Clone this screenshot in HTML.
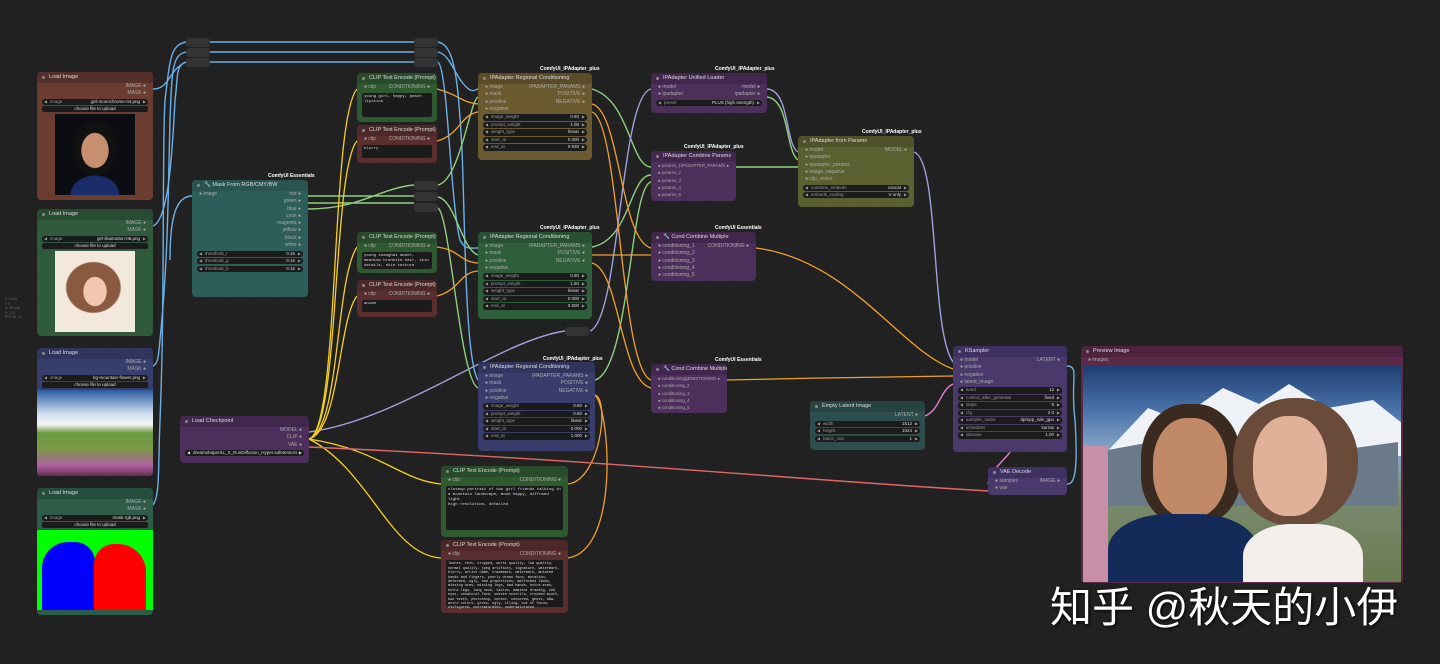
<!DOCTYPE html>
<html><head><meta charset="utf-8">
<style>
*{box-sizing:border-box;margin:0;padding:0}
body{width:1440px;height:664px;overflow:hidden;background:#212121;font-family:"Liberation Sans",sans-serif;color:#bbb;position:relative;
background-image:radial-gradient(#282828 0.6px,transparent 0.7px);background-size:6px 6px}
.n{position:absolute;border-radius:4px;overflow:hidden;font-size:5px;line-height:7px;white-space:nowrap}
.t{height:11px;line-height:11px;padding-left:12px;font-size:5.5px;color:#ddd;position:relative;white-space:nowrap;overflow:hidden}
.t:before{content:"";position:absolute;left:5px;top:4px;width:3px;height:3px;border-radius:50%;background:#888}
.r{height:7.3px;position:relative;padding:0 7px;color:#aaa}
.r .o{position:absolute;right:7px}
.w{margin:1.3px 5px;height:6.2px;border-radius:3px;background:#1b1b1b;color:#999;font-size:4.5px;line-height:6.2px;padding:0 8px;position:relative;overflow:hidden}
.w b{position:absolute;right:8px;font-weight:normal;color:#ddd}
.w:before{content:"◀";position:absolute;left:2px;font-size:4px}
.w:after{content:"▶";position:absolute;right:2px;font-size:4px}
.tx{margin:2px 5px;background:#1b1b1b;border-radius:2px;font-family:"Liberation Mono",monospace;font-size:4px;line-height:5px;color:#ddd;padding:2px;white-space:normal}
.lab{position:absolute;font-size:5px;color:#fff;font-weight:bold}
.rr{position:absolute;width:24px;height:9px;background:#333;border-radius:3px}
.btn{margin:1px 5px;height:6px;background:#1b1b1b;border-radius:2px;text-align:center;font-size:4.5px;line-height:6px;color:#ddd}
.sm .r{font-size:4.3px}
</style></head><body>

<svg width="1440" height="664" style="position:absolute;left:0;top:0" fill="none" stroke-width="1.4">
<g stroke="#6cb0e6">
<path d="M210 42 H414 M210 52 H414 M210 62 H414"/>
<path d="M186 42 C170 45 170 60 165 100 C162 150 165 300 160 420 C158 470 160 495 153 505"/>
<path d="M186 52 C172 55 172 70 170 120 C168 200 168 260 160 340 C158 360 158 363 153 366"/>
<path d="M186 62 C175 65 178 80 175 100 C172 160 168 220 153 226"/>
<path d="M153 89 C170 89 168 70 186 62"/>
<path d="M192 196 C175 196 170 220 170 260"/>
<path d="M438 42 C455 45 458 80 462 150 C465 220 465 360 478 380"/>
<path d="M438 52 C452 55 455 80 470 90 C475 92 476 89 478 89"/>
<path d="M438 62 C448 70 450 200 460 240 C465 250 470 248 478 248"/>
<path d="M1067 366 C1080 366 1070 380 1075 420 C1078 470 1075 485 1067 484"/>
</g>
<g stroke="#8fcf80">
<path d="M308 196 H414 M308 203 H414 M308 209 C360 209 380 188 414 185"/>
<path d="M438 185 C460 180 470 100 478 97"/>
<path d="M438 197 C455 200 462 250 478 255"/>
<path d="M438 208 C450 215 460 380 478 388"/>
<path d="M592 89 C630 100 630 166 651 167"/>
<path d="M592 247 C630 240 630 175 651 175"/>
<path d="M595 380 C630 370 630 185 651 182"/>
<path d="M767 97 C790 100 785 150 798 160"/>
<path d="M736 167 H798"/>
</g>
<g stroke="#a0a0dd">
<path d="M309 432 C400 420 500 340 565 331"/>
<path d="M590 331 C620 320 620 95 651 89"/>
<path d="M767 89 C790 90 785 145 798 152"/>
<path d="M914 152 C940 160 930 330 953 362"/>
</g>
<g stroke="#f5d020" stroke-width="1.3">
<path d="M309 439 C340 430 330 120 357 89"/>
<path d="M309 439 C340 430 332 170 357 141"/>
<path d="M309 439 C340 430 335 280 357 247"/>
<path d="M309 439 C340 430 338 320 357 296"/>
<path d="M309 439 C380 450 400 480 441 484"/>
<path d="M309 439 C370 470 390 555 441 558"/>
</g>
<g stroke="#f0a030" stroke-width="1.3">
<path d="M437 89 C460 95 460 102 478 104"/>
<path d="M437 141 C460 135 460 115 478 112"/>
<path d="M437 247 C460 250 460 262 478 263"/>
<path d="M437 296 C460 290 460 272 478 271"/>
<path d="M592 104 C620 110 620 240 651 248"/>
<path d="M592 112 C620 120 620 370 651 380"/>
<path d="M592 255 H651"/>
<path d="M592 263 C620 270 620 380 651 388"/>
<path d="M756 248 C850 260 900 350 953 369"/>
<path d="M727 380 C800 378 900 377 953 376"/>
<path d="M568 484 C600 480 610 400 595 395"/>
<path d="M568 558 C620 550 610 410 595 395"/>
</g>
<path d="M309 447 C600 460 800 480 988 491" stroke="#e06868"/>
<path d="M925 416 C940 410 940 390 953 384" stroke="#e080d0"/>
<path d="M1010 452 C1005 460 990 470 988 484" stroke="#e080d0"/>
</svg>

<div class="rr" style="left:186px;top:38px"></div><div class="rr" style="left:186px;top:48px"></div><div class="rr" style="left:186px;top:58px"></div>
<div class="rr" style="left:414px;top:38px"></div><div class="rr" style="left:414px;top:48px"></div><div class="rr" style="left:414px;top:58px"></div>
<div class="rr" style="left:414px;top:181px"></div><div class="rr" style="left:414px;top:192px"></div><div class="rr" style="left:414px;top:203px"></div>
<div class="rr" style="left:565px;top:327px"></div>

<div style="position:absolute;left:5px;top:297px;font-size:3.5px;color:#666;line-height:4.5px">T: 0.00s<br>I: 0<br>N: 26 [26]<br>V: 213<br>FPS:41.15</div>

<div class="n" style="left:37px;top:72px;width:116px;height:128px;background:#6a3d30">
<div class="t" style="background:#55302a">Load Image</div>
<div class="r"><span class="o">IMAGE ●</span></div><div class="r"><span class="o">MASK ●</span></div>
<div class="w">image<b>girl-monochrome-04.png</b></div><div class="btn">choose file to upload</div>
<div style="margin:2px auto;width:80px;height:81px;background:radial-gradient(ellipse 14px 18px at 50% 45%,#c69070 95%,transparent),radial-gradient(ellipse 25px 20px at 50% 100%,#1a2d6a 95%,transparent),radial-gradient(ellipse 22px 28px at 50% 42%,#111 95%,transparent),#0b0d12"></div>
</div>
<div class="n" style="left:37px;top:209px;width:116px;height:127px;background:#2f5a3b">
<div class="t" style="background:#284c32">Load Image</div>
<div class="r"><span class="o">IMAGE ●</span></div><div class="r"><span class="o">MASK ●</span></div>
<div class="w">image<b>girl-illustration-06.png</b></div><div class="btn">choose file to upload</div>
<div style="margin:2px auto;width:80px;height:81px;background:radial-gradient(ellipse 12px 15px at 50% 50%,#f0c8b0 95%,transparent),radial-gradient(ellipse 28px 26px at 48% 45%,#8a5a40 95%,transparent),#f3e8dc"></div>
</div>
<div class="n" style="left:37px;top:348px;width:116px;height:128px;background:#383e6c">
<div class="t" style="background:#30355e">Load Image</div>
<div class="r"><span class="o">IMAGE ●</span></div><div class="r"><span class="o">MASK ●</span></div>
<div class="w">image<b>bg-mountain-flower.png</b></div><div class="btn">choose file to upload</div>
<div style="margin-top:2px;width:116px;height:86px;background:linear-gradient(#2a5aa0 0%,#cfe0f0 28%,#f5f5f5 40%,#6a9a40 50%,#7a9a48 68%,#b060a0 88%,#603050 100%)"></div>
</div>
<div class="n" style="left:37px;top:488px;width:116px;height:127px;background:#2d5c48">
<div class="t" style="background:#264e3c">Load Image</div>
<div class="r"><span class="o">IMAGE ●</span></div><div class="r"><span class="o">MASK ●</span></div>
<div class="w">image<b>mask-rgb.png</b></div><div class="btn">choose file to upload</div>
<div style="margin-top:2px;width:116px;height:80px;background:#00ff00;position:relative;overflow:hidden">
<div style="position:absolute;left:5px;top:12px;width:53px;height:70px;background:#0000ff;border-radius:26px 20px 0 0"></div>
<div style="position:absolute;left:57px;top:14px;width:52px;height:70px;background:#ff0000;border-radius:20px 28px 0 0"></div></div>
</div>

<div class="lab" style="left:268px;top:173px">ComfyUI Essentials</div>
<div class="n" style="left:192px;top:180px;width:116px;height:117px;background:#2e5e5a">
<div class="t" style="background:#295450">🔧 Mask From RGB/CMY/BW</div>
<div class="r">● image<span class="o">red ●</span></div><div class="r"><span class="o">green ●</span></div><div class="r"><span class="o">blue ●</span></div><div class="r"><span class="o">cyan ●</span></div><div class="r"><span class="o">magenta ●</span></div><div class="r"><span class="o">yellow ●</span></div><div class="r"><span class="o">black ●</span></div><div class="r"><span class="o">white ●</span></div>
<div class="w">threshold_r<b>0.15</b></div><div class="w">threshold_g<b>0.15</b></div><div class="w">threshold_b<b>0.15</b></div>
</div>

<div class="n" style="left:180px;top:416px;width:129px;height:47px;background:#4c2f5a">
<div class="t" style="background:#41274e">Load Checkpoint</div>
<div class="r"><span class="o">MODEL ●</span></div><div class="r"><span class="o">CLIP ●</span></div><div class="r"><span class="o">VAE ●</span></div>
<div class="w" style="color:#ddd">dreamshaperXL_X_RunDiffusion_Hyper.safetensors</div>
</div>

<div class="n" style="left:357px;top:73px;width:80px;height:49px;background:#2f5a30"><div class="t" style="background:#284c2a">CLIP Text Encode (Prompt)</div>
<div class="r">● clip<span class="o">CONDITIONING ●</span></div><div class="tx" style="height:24px">young girl, happy, peach lipstick</div></div>
<div class="n" style="left:357px;top:125px;width:80px;height:38px;background:#5a2e2e"><div class="t" style="background:#4c2828">CLIP Text Encode (Prompt)</div>
<div class="r">● clip<span class="o">CONDITIONING ●</span></div><div class="tx" style="height:13px">blurry</div></div>
<div class="n" style="left:357px;top:232px;width:80px;height:41px;background:#2f5a30"><div class="t" style="background:#284c2a">CLIP Text Encode (Prompt)</div>
<div class="r">● clip<span class="o">CONDITIONING ●</span></div><div class="tx" style="height:17px">young shanghai model, meadium brunette hair, skin details, skin texture</div></div>
<div class="n" style="left:357px;top:280px;width:80px;height:37px;background:#5a2e2e"><div class="t" style="background:#4c2828">CLIP Text Encode (Prompt)</div>
<div class="r">● clip<span class="o">CONDITIONING ●</span></div><div class="tx" style="height:12px">anime</div></div>

<div class="lab" style="left:540px;top:66px">ComfyUI_IPAdapter_plus</div>
<div class="n" style="left:478px;top:73px;width:114px;height:87px;background:#6b5a2f">
<div class="t" style="background:#5a4c28">IPAdapter Regional Conditioning</div>
<div class="r">● image<span class="o">IPADAPTER_PARAMS ●</span></div><div class="r">● mask<span class="o">POSITIVE ●</span></div><div class="r">● positive<span class="o">NEGATIVE ●</span></div><div class="r">● negative</div>
<div class="w">image_weight<b>0.80</b></div><div class="w">prompt_weight<b>1.00</b></div><div class="w">weight_type<b>linear</b></div><div class="w">start_at<b>0.000</b></div><div class="w">end_at<b>0.930</b></div></div>
<div class="lab" style="left:540px;top:225px">ComfyUI_IPAdapter_plus</div>
<div class="n" style="left:478px;top:232px;width:114px;height:87px;background:#2f5e3a">
<div class="t" style="background:#285032">IPAdapter Regional Conditioning</div>
<div class="r">● image<span class="o">IPADAPTER_PARAMS ●</span></div><div class="r">● mask<span class="o">POSITIVE ●</span></div><div class="r">● positive<span class="o">NEGATIVE ●</span></div><div class="r">● negative</div>
<div class="w">image_weight<b>0.80</b></div><div class="w">prompt_weight<b>1.50</b></div><div class="w">weight_type<b>linear</b></div><div class="w">start_at<b>0.000</b></div><div class="w">end_at<b>0.500</b></div></div>
<div class="lab" style="left:543px;top:356px">ComfyUI_IPAdapter_plus</div>
<div class="n" style="left:478px;top:362px;width:117px;height:89px;background:#383d6c">
<div class="t" style="background:#30355e">IPAdapter Regional Conditioning</div>
<div class="r">● image<span class="o">IPADAPTER_PARAMS ●</span></div><div class="r">● mask<span class="o">POSITIVE ●</span></div><div class="r">● positive<span class="o">NEGATIVE ●</span></div><div class="r">● negative</div>
<div class="w">image_weight<b>0.80</b></div><div class="w">prompt_weight<b>0.80</b></div><div class="w">weight_type<b>linear</b></div><div class="w">start_at<b>0.000</b></div><div class="w">end_at<b>1.000</b></div></div>

<div class="lab" style="left:715px;top:66px">ComfyUI_IPAdapter_plus</div>
<div class="n" style="left:651px;top:73px;width:116px;height:40px;background:#4c2f5a">
<div class="t" style="background:#41274e">IPAdapter Unified Loader</div>
<div class="r">● model<span class="o">model ●</span></div><div class="r">● ipadapter<span class="o">ipadapter ●</span></div><div class="w">preset<b>PLUS (high strength)</b></div></div>
<div class="lab" style="left:684px;top:144px">ComfyUI_IPAdapter_plus</div>
<div class="n sm" style="left:651px;top:151px;width:85px;height:50px;background:#4c2f5a">
<div class="t" style="background:#41274e">IPAdapter Combine Params</div>
<div class="r">● params_1<span class="o">IPADAPTER_PARAMS ●</span></div><div class="r">● params_2</div><div class="r">● params_3</div><div class="r">● params_4</div><div class="r">● params_5</div></div>
<div class="lab" style="left:715px;top:225px">ComfyUI Essentials</div>
<div class="n" style="left:651px;top:232px;width:105px;height:49px;background:#4c2f5a">
<div class="t" style="background:#41274e">🔧 Cond Combine Multiple</div>
<div class="r">● conditioning_1<span class="o">CONDITIONING ●</span></div><div class="r">● conditioning_2</div><div class="r">● conditioning_3</div><div class="r">● conditioning_4</div><div class="r">● conditioning_5</div></div>
<div class="lab" style="left:715px;top:357px">ComfyUI Essentials</div>
<div class="n sm" style="left:651px;top:364px;width:76px;height:49px;background:#4c2f5a">
<div class="t" style="background:#41274e">🔧 Cond Combine Multiple</div>
<div class="r">● conditioning_1<span class="o">CONDITIONING ●</span></div><div class="r">● conditioning_2</div><div class="r">● conditioning_3</div><div class="r">● conditioning_4</div><div class="r">● conditioning_5</div></div>

<div class="lab" style="left:862px;top:129px">ComfyUI_IPAdapter_plus</div>
<div class="n" style="left:798px;top:136px;width:116px;height:71px;background:#5b6030">
<div class="t" style="background:#4e5228">IPAdapter from Params</div>
<div class="r">● model<span class="o">MODEL ●</span></div><div class="r">● ipadapter</div><div class="r">● ipadapter_params</div><div class="r">● image_negative</div><div class="r">● clip_vision</div>
<div class="w">combine_embeds<b>concat</b></div><div class="w">embeds_scaling<b>V only</b></div></div>

<div class="n" style="left:441px;top:466px;width:127px;height:71px;background:#2f5a30"><div class="t" style="background:#284c2a">CLIP Text Encode (Prompt)</div>
<div class="r">● clip<span class="o">CONDITIONING ●</span></div><div class="tx" style="height:44px">closeup portrait of two girl friends talking in a mountain landscape, mood happy, diffused light<br>high resolution, detailed</div></div>
<div class="n" style="left:441px;top:540px;width:127px;height:73px;background:#5a2e2e"><div class="t" style="background:#4c2828">CLIP Text Encode (Prompt)</div>
<div class="r">● clip<span class="o">CONDITIONING ●</span></div><div class="tx" style="height:47px;font-size:3.5px;line-height:4.4px">lowres, text, cropped, worst quality, low quality, normal quality, jpeg artifacts, signature, watermark, blurry, artist name, trademark, watermark, mutated hands and fingers, poorly drawn face, mutation, deformed, ugly, bad proportions, malformed limbs, missing arms, missing legs, bad hands, extra arms, extra legs, long neck, tattoo, amateur drawing, odd eyes, unnatural face, uneven nostrils, crooked mouth, bad teeth, photoshop, censor, censored, ghost, b&amp;w, weird colors, gross, ugly, tiling, out of focus, disfigured, oversaturated, undersaturated</div></div>

<div class="n" style="left:810px;top:401px;width:115px;height:49px;background:#2d4e4c">
<div class="t" style="background:#274442">Empty Latent Image</div>
<div class="r"><span class="o">LATENT ●</span></div><div class="w">width<b>1512</b></div><div class="w">height<b>1024</b></div><div class="w">batch_size<b>1</b></div></div>

<div class="n" style="left:953px;top:346px;width:114px;height:106px;background:#4a3a6c">
<div class="t" style="background:#3e3060">KSampler</div>
<div class="r">● model<span class="o">LATENT ●</span></div><div class="r">● positive</div><div class="r">● negative</div><div class="r">● latent_image</div>
<div class="w">seed<b>12</b></div><div class="w">control_after_generate<b>fixed</b></div><div class="w">steps<b>8</b></div><div class="w">cfg<b>2.0</b></div><div class="w">sampler_name<b>dpmpp_sde_gpu</b></div><div class="w">scheduler<b>karras</b></div><div class="w">denoise<b>1.00</b></div></div>
<div class="n" style="left:988px;top:467px;width:79px;height:28px;background:#4a3a6c">
<div class="t" style="background:#3e3060">VAE Decode</div>
<div class="r">● samples<span class="o">IMAGE ●</span></div><div class="r">● vae</div></div>

<div class="n" style="left:1081px;top:346px;width:322px;height:237px;background:#5a2a48">
<div class="t" style="background:#4e2340">Preview Image</div>
<div class="r">● images</div>
<div style="position:absolute;left:2px;top:20px;width:318px;height:216px;overflow:hidden;background:linear-gradient(#1e3e72 0%,#4a72a8 20%,#8aa8c8 40%,#7a8a70 60%,#6a7a50 100%)">
<div style="position:absolute;left:20px;top:10px;width:300px;height:80px;background:#eef2f6;clip-path:polygon(0 100%,15% 40%,25% 55%,40% 15%,52% 35%,62% 10%,75% 40%,90% 30%,100% 60%,100% 100%)"></div>
<div style="position:absolute;left:25px;top:60px;width:290px;height:80px;background:#6a7a88;clip-path:polygon(0 30%,30% 10%,60% 40%,100% 20%,100% 100%,0 100%)"></div>
<div style="position:absolute;left:0;top:80px;width:25px;height:136px;background:#c890a8"></div>
<div style="position:absolute;left:58px;top:38px;width:100px;height:120px;border-radius:45% 45% 40% 40%;background:#3a2a20"></div>
<div style="position:absolute;left:70px;top:52px;width:74px;height:100px;border-radius:45%;background:#c08a68"></div>
<div style="position:absolute;left:25px;top:148px;width:150px;height:90px;border-radius:40% 40% 0 0;background:#142a58"></div>
<div style="position:absolute;left:150px;top:32px;width:125px;height:128px;border-radius:48%;background:#6a4a38"></div>
<div style="position:absolute;left:170px;top:50px;width:74px;height:100px;border-radius:45%;background:#e0b098"></div>
<div style="position:absolute;left:160px;top:158px;width:120px;height:80px;border-radius:40% 40% 0 0;background:#f2eeea"></div>
</div></div>

<div style="position:absolute;left:1050px;top:574px;font-family:'Liberation Sans','Noto Sans CJK SC',sans-serif;font-size:42px;color:#fff;text-shadow:1px 1px 3px #000;white-space:nowrap">知乎 @秋天的小伊</div>
</body></html>
